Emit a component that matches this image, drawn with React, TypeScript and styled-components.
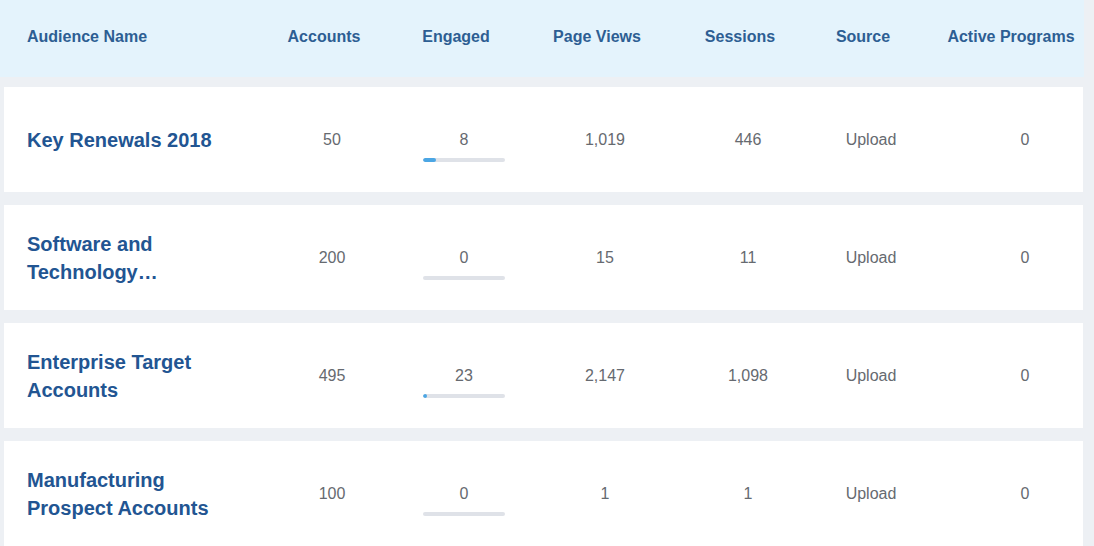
import React from "react";
import styled, { createGlobalStyle } from "styled-components";

const GlobalStyle = createGlobalStyle`
  html, body {
    margin: 0;
    padding: 0;
    background: #edf0f4;
    font-family: "Liberation Sans", Arial, sans-serif;
  }
`;

const COLS = "262px 132px 132px 150px 136px 110px 157px";

const Page = styled.div`
  width: 1094px;
  height: 546px;
  overflow: hidden;
  background: #edf0f4;
`;

const HeaderBar = styled.div`
  width: 1084px;
  height: 77px;
  background: #e4f3fc;
  padding-left: 4px;
  box-sizing: border-box;
  display: grid;
  grid-template-columns: ${COLS};
  align-items: center;
  margin-bottom: 10px;
`;

const HeadCell = styled.div<{ $first?: boolean; $last?: boolean }>`
  font-size: 16px;
  font-weight: 700;
  color: #2d5e93;
  white-space: nowrap;
  text-align: ${(p) => (p.$first ? "left" : "center")};
  padding-left: ${(p) => (p.$first ? "23px" : p.$last ? "13px" : "0")};
  padding-right: ${(p) => (p.$first || p.$last ? "0" : "16px")};
  margin-top: -4px;
`;

const Rows = styled.div`
  display: flex;
  flex-direction: column;
  gap: 13px;
  padding-left: 4px;
`;

const Card = styled.div`
  width: 1079px;
  height: 105px;
  background: #ffffff;
  display: grid;
  grid-template-columns: ${COLS};
  align-items: center;
  box-sizing: border-box;
`;

const NameCell = styled.div`
  padding-left: 23px;
`;

const Name = styled.div`
  width: 222px;
  font-size: 20px;
  font-weight: 700;
  line-height: 28px;
  color: #225592;
`;

const Value = styled.div<{ $shift?: number }>`
  font-size: 16px;
  line-height: 20px;
  color: #666a70;
  text-align: center;
  padding-left: ${(p) => p.$shift ?? 0}px;
`;

const EngagedCell = styled.div`
  display: flex;
  flex-direction: column;
  align-items: center;
  padding-top: 12px;
`;

const Track = styled.div`
  width: 82px;
  height: 4px;
  border-radius: 2px;
  background: #dfe2e8;
  margin-top: 8px;
  overflow: hidden;
`;

const Fill = styled.div`
  height: 100%;
  background: #4ba6e4;
  border-radius: 2px;
`;

type Row = {
  name: string;
  accounts: number;
  engaged: number;
  pageViews: string;
  sessions: string;
  source: string;
  active: number;
};

const rows: Row[] = [
  { name: "Key Renewals 2018", accounts: 50, engaged: 8, pageViews: "1,019", sessions: "446", source: "Upload", active: 0 },
  { name: "Software and Technology…", accounts: 200, engaged: 0, pageViews: "15", sessions: "11", source: "Upload", active: 0 },
  { name: "Enterprise Target Accounts", accounts: 495, engaged: 23, pageViews: "2,147", sessions: "1,098", source: "Upload", active: 0 },
  { name: "Manufacturing Prospect Accounts", accounts: 100, engaged: 0, pageViews: "1", sessions: "1", source: "Upload", active: 0 },
];

export default function App() {
  return (
    <>
      <GlobalStyle />
      <Page>
        <HeaderBar>
          <HeadCell $first>Audience Name</HeadCell>
          <HeadCell>Accounts</HeadCell>
          <HeadCell>Engaged</HeadCell>
          <HeadCell>Page Views</HeadCell>
          <HeadCell>Sessions</HeadCell>
          <HeadCell>Source</HeadCell>
          <HeadCell $last>Active Programs</HeadCell>
        </HeaderBar>
        <Rows>
          {rows.map((r) => {
            const pct = r.accounts ? (r.engaged / r.accounts) * 100 : 0;
            return (
              <Card key={r.name}>
                <NameCell>
                  <Name>{r.name}</Name>
                </NameCell>
                <Value>{r.accounts}</Value>
                <EngagedCell>
                  <Value>{r.engaged}</Value>
                  <Track>
                    <Fill style={{ width: `${pct}%` }} />
                  </Track>
                </EngagedCell>
                <Value>{r.pageViews}</Value>
                <Value>{r.sessions}</Value>
                <Value>{r.source}</Value>
                <Value $shift={41}>{r.active}</Value>
              </Card>
            );
          })}
        </Rows>
      </Page>
    </>
  );
}
